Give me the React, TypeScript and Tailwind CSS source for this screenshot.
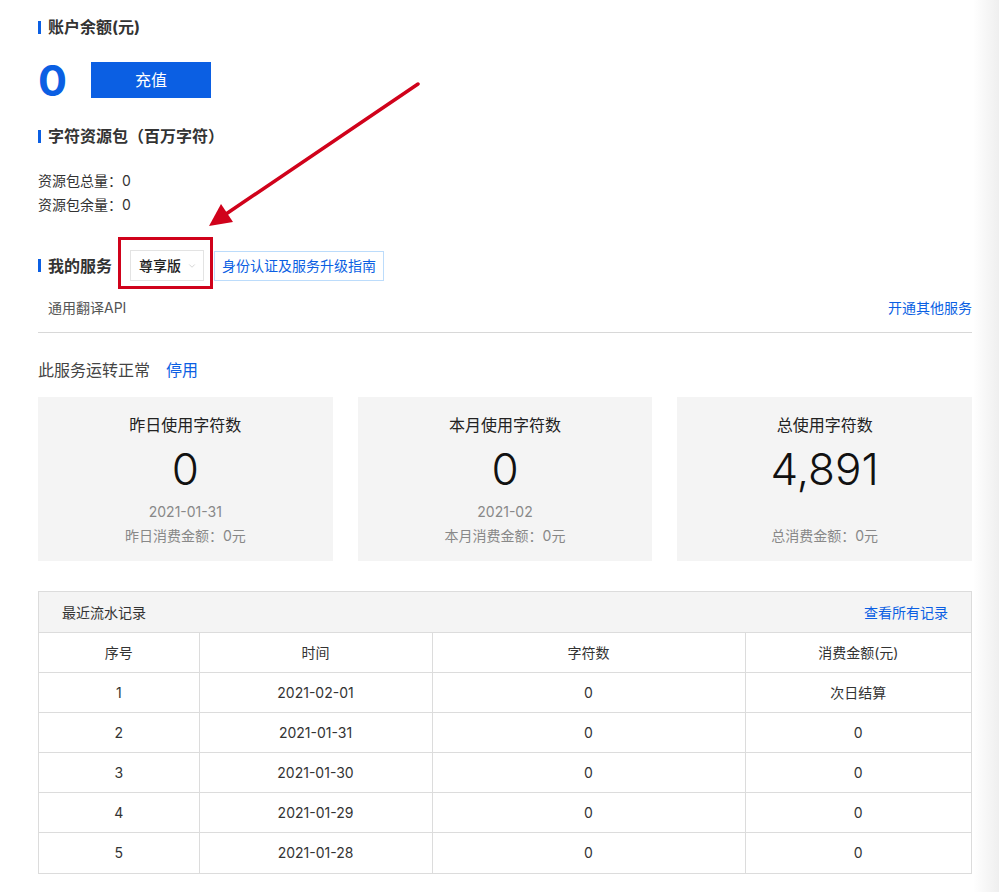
import { ChevronDown } from 'lucide-react'

const FONT = "font-['Inter','Noto_Sans_CJK_SC',sans-serif]"

interface StatCardProps {
    title: string
    value: string
    date?: string
    amount: string
}

const RECORDS = [
    { id: 1, date: '2021-02-01', chars: '0', cost: '次日结算' },
    { id: 2, date: '2021-01-31', chars: '0', cost: '0' },
    { id: 3, date: '2021-01-30', chars: '0', cost: '0' },
    { id: 4, date: '2021-01-29', chars: '0', cost: '0' },
    { id: 5, date: '2021-01-28', chars: '0', cost: '0' },
]

function SectionTitle({ children }: { children: React.ReactNode }) {
    return (
        <div className="flex items-center gap-[7px]">
            <span className="h-[13px] w-[3px] bg-[#0b5fe3]" />
            <h2 className="text-[16px] font-bold leading-none text-[#333]">{children}</h2>
        </div>
    )
}

function StatCard({ title, value, date, amount }: StatCardProps) {
    return (
        <div className="flex h-[164px] flex-col items-center bg-[#f4f4f4] pt-[17px]">
            <div className="text-[16px] leading-[22px] text-[#222]">{title}</div>
            <div className="mt-[8px] text-[44px] font-light leading-[50px] text-[#111]">{value}</div>
            <div className="mt-[8px] h-[20px] text-[14px] leading-[20px] text-[#888]">{date}</div>
            <div className="mt-[4px] text-[14px] leading-[20px] text-[#888]">{amount}</div>
        </div>
    )
}

export default function App() {
    return (
        <div className={`relative min-h-[892px] w-full bg-white text-[#333] ${FONT}`}>
            <div className="w-[934px] pl-[38px] box-content pt-[19px] pb-[20px]">
                {/* Balance */}
                <SectionTitle>账户余额(元)</SectionTitle>
                <div className="mt-[27px] flex items-center gap-[24px]">
                    <span className="text-[43px] font-bold leading-[36px] text-[#0b5fe3]">0</span>
                    <button className="h-[36px] w-[120px] bg-[#0b5fe3] text-[16px] text-white">充值</button>
                </div>

                {/* Character packs */}
                <div className="mt-[30px]">
                    <SectionTitle>字符资源包（百万字符）</SectionTitle>
                </div>
                <div className="mt-[25px] text-[14px] leading-[24px] text-[#333]">
                    <div>资源包总量：0</div>
                    <div>资源包余量：0</div>
                </div>

                {/* My services */}
                <div className="mt-[33px] flex items-center">
                    <SectionTitle>我的服务</SectionTitle>
                    <div className="ml-[18px] flex h-[31px] w-[74px] items-center justify-between border border-[#e3e3e3] pl-[8px] pr-[6px] text-[14px] font-medium text-[#222]">
                        <span>尊享版</span>
                        <ChevronDown className="h-[10px] w-[10px] text-[#bbb]" strokeWidth={1.5} />
                    </div>
                    <a className="ml-[10px] flex h-[30px] items-center border border-[#bcdcfb] px-[7px] text-[14px] text-[#0b5fe3]">
                        身份认证及服务升级指南
                    </a>
                </div>
                <div className="mt-[12px] flex h-[40px] items-start justify-between border-b border-[#d8d8d8] pt-[5px] text-[14px] leading-[20px]">
                    <span className="pl-[10px] text-[#555]">通用翻译API</span>
                    <a className="text-[#0b5fe3]">开通其他服务</a>
                </div>

                <div className="mt-[27px] flex items-center gap-[16px] text-[16px] leading-[20px]">
                    <span className="text-[#444]">此服务运转正常</span>
                    <a className="text-[#0b5fe3]">停用</a>
                </div>

                {/* Stats */}
                <div className="mt-[17px] grid grid-cols-3 gap-[25px]">
                    <StatCard title="昨日使用字符数" value="0" date="2021-01-31" amount="昨日消费金额：0元" />
                    <StatCard title="本月使用字符数" value="0" date="2021-02" amount="本月消费金额：0元" />
                    <StatCard title="总使用字符数" value="4,891" amount="总消费金额：0元" />
                </div>

                {/* Records */}
                <div className="mt-[30px] border border-[#dcdcdc]">
                    <div className="flex h-[40px] items-center justify-between bg-[#f4f4f4] px-[23px] text-[14px]">
                        <span className="text-[#333]">最近流水记录</span>
                        <a className="text-[#0b5fe3]">查看所有记录</a>
                    </div>
                    <table className="w-full border-collapse text-[14px] text-[#333]">
                        <colgroup>
                            <col className="w-[160px]" />
                            <col className="w-[233px]" />
                            <col className="w-[313px]" />
                            <col />
                        </colgroup>
                        <thead>
                            <tr className="h-[40px]">
                                <th className="border-t border-r border-[#dcdcdc] font-normal">序号</th>
                                <th className="border-t border-r border-[#dcdcdc] font-normal">时间</th>
                                <th className="border-t border-r border-[#dcdcdc] font-normal">字符数</th>
                                <th className="border-t border-[#dcdcdc] font-normal">消费金额(元)</th>
                            </tr>
                        </thead>
                        <tbody>
                            {RECORDS.map((r) => (
                                <tr key={r.id} className="h-[40px] text-center">
                                    <td className="border-t border-r border-[#dcdcdc]">{r.id}</td>
                                    <td className="border-t border-r border-[#dcdcdc]">{r.date}</td>
                                    <td className="border-t border-r border-[#dcdcdc]">{r.chars}</td>
                                    <td className="border-t border-[#dcdcdc]">{r.cost}</td>
                                </tr>
                            ))}
                        </tbody>
                    </table>
                </div>
            </div>

            {/* Annotation: red box + arrow */}
            <div className="pointer-events-none absolute left-[118px] top-[237px] h-[52px] w-[95px] border-[3px] border-[#d0021b]" />
            <svg className="pointer-events-none absolute left-0 top-0" width="999" height="892">
                <line x1="418" y1="84" x2="226" y2="214" stroke="#d0021b" strokeWidth="3.5" strokeLinecap="round" />
                <polygon points="209,226 221,204 233,222" fill="#d0021b" />
            </svg>

            {/* right edge shade */}
            <div className="pointer-events-none absolute right-0 top-0 h-full w-[26px] bg-gradient-to-r from-white to-[#efefef]" />
        </div>
    )
}
